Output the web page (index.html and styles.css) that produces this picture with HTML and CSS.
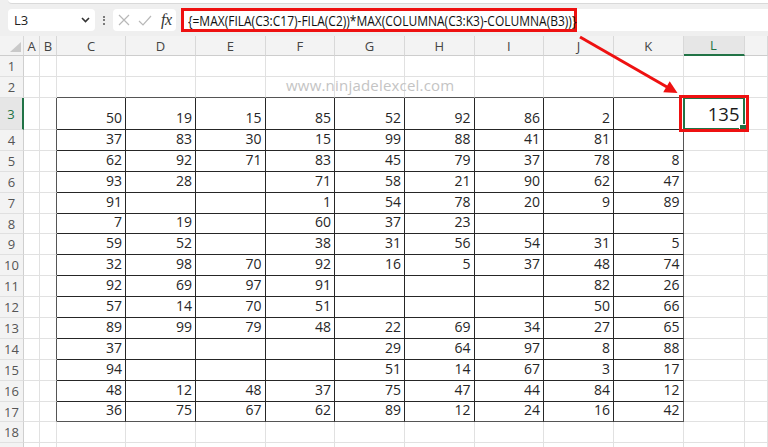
FILE: index.html
```html
<!DOCTYPE html>
<html lang="es">
<head>
<meta charset="utf-8">
<title>Excel</title>
<link rel="stylesheet" href="styles.css">
</head>
<body>
<div class="top">
  <div class="ribbon-edge"></div>
  <div class="fbar">
    <div class="namebox"><span>L3</span><svg class="chev" width="9" height="6" viewBox="0 0 9 6"><path d="M1 1l3.5 3.5L8 1" fill="none" stroke="#333" stroke-width="1.6"/></svg></div>
    <div class="grip"><i></i><i></i><i></i></div>
    <div class="fxbox">
      <svg class="ico-x" width="12" height="12" viewBox="0 0 12 12"><path d="M1 1l10 10M11 1L1 11" stroke="#b8b8b8" stroke-width="1.2" fill="none"/></svg>
      <svg class="ico-ok" width="14" height="11" viewBox="0 0 14 11"><path d="M1 6l4 4 8-9" fill="none" stroke="#b8b8b8" stroke-width="1.2"/></svg>
      <span class="fx">fx</span>
    </div>
    <div class="formula"><span class="fbox"><span class="ftext">{=MAX(FILA(C3:C17)-FILA(C2))*MAX(COLUMNA(C3:K3)-COLUMNA(B3))}</span></span></div>
  </div>
</div>
<div class="sheet">
  <div class="row hdr"><span class="corner"><svg width="11" height="10" viewBox="0 0 11 10"><path d="M11 0V10H0Z" fill="#c9c9c9"/></svg></span><span>A</span><span>B</span><span>C</span><span>D</span><span>E</span><span>F</span><span>G</span><span>H</span><span>I</span><span>J</span><span>K</span><span class="on">L</span><span></span></div>
  <div class="row r1"><span class="rh">1</span><span></span><span></span><span></span><span></span><span></span><span></span><span></span><span></span><span></span><span></span><span></span><span></span><span></span></div>
  <div class="row r2"><span class="rh">2</span><span></span><span></span><span class="tb"></span><span class="tb"></span><span class="tb"></span><span class="tb"></span><span class="tb"></span><span class="tb"></span><span class="tb"></span><span class="tb"></span><span class="tb"></span><span></span><span></span></div>
  <div class="row r3"><span class="rh on">3</span><span></span><span class="lb"></span><span class="d">50</span><span class="d">19</span><span class="d">15</span><span class="d">85</span><span class="d">52</span><span class="d">92</span><span class="d">86</span><span class="d">2</span><span class="d"></span><span class="sel">135<b class="mark"></b></span><span></span></div>
  <div class="row"><span class="rh">4</span><span></span><span class="lb"></span><span class="d">37</span><span class="d">83</span><span class="d">30</span><span class="d">15</span><span class="d">99</span><span class="d">88</span><span class="d">41</span><span class="d">81</span><span class="d"></span><span></span><span></span></div>
  <div class="row"><span class="rh">5</span><span></span><span class="lb"></span><span class="d">62</span><span class="d">92</span><span class="d">71</span><span class="d">83</span><span class="d">45</span><span class="d">79</span><span class="d">37</span><span class="d">78</span><span class="d">8</span><span></span><span></span></div>
  <div class="row"><span class="rh">6</span><span></span><span class="lb"></span><span class="d">93</span><span class="d">28</span><span class="d"></span><span class="d">71</span><span class="d">58</span><span class="d">21</span><span class="d">90</span><span class="d">62</span><span class="d">47</span><span></span><span></span></div>
  <div class="row"><span class="rh">7</span><span></span><span class="lb"></span><span class="d">91</span><span class="d"></span><span class="d"></span><span class="d">1</span><span class="d">54</span><span class="d">78</span><span class="d">20</span><span class="d">9</span><span class="d">89</span><span></span><span></span></div>
  <div class="row"><span class="rh">8</span><span></span><span class="lb"></span><span class="d">7</span><span class="d">19</span><span class="d"></span><span class="d">60</span><span class="d">37</span><span class="d">23</span><span class="d"></span><span class="d"></span><span class="d"></span><span></span><span></span></div>
  <div class="row"><span class="rh">9</span><span></span><span class="lb"></span><span class="d">59</span><span class="d">52</span><span class="d"></span><span class="d">38</span><span class="d">31</span><span class="d">56</span><span class="d">54</span><span class="d">31</span><span class="d">5</span><span></span><span></span></div>
  <div class="row"><span class="rh">10</span><span></span><span class="lb"></span><span class="d">32</span><span class="d">98</span><span class="d">70</span><span class="d">92</span><span class="d">16</span><span class="d">5</span><span class="d">37</span><span class="d">48</span><span class="d">74</span><span></span><span></span></div>
  <div class="row"><span class="rh">11</span><span></span><span class="lb"></span><span class="d">92</span><span class="d">69</span><span class="d">97</span><span class="d">91</span><span class="d"></span><span class="d"></span><span class="d"></span><span class="d">82</span><span class="d">26</span><span></span><span></span></div>
  <div class="row"><span class="rh">12</span><span></span><span class="lb"></span><span class="d">57</span><span class="d">14</span><span class="d">70</span><span class="d">51</span><span class="d"></span><span class="d"></span><span class="d"></span><span class="d">50</span><span class="d">66</span><span></span><span></span></div>
  <div class="row"><span class="rh">13</span><span></span><span class="lb"></span><span class="d">89</span><span class="d">99</span><span class="d">79</span><span class="d">48</span><span class="d">22</span><span class="d">69</span><span class="d">34</span><span class="d">27</span><span class="d">65</span><span></span><span></span></div>
  <div class="row"><span class="rh">14</span><span></span><span class="lb"></span><span class="d">37</span><span class="d"></span><span class="d"></span><span class="d"></span><span class="d">29</span><span class="d">64</span><span class="d">97</span><span class="d">8</span><span class="d">88</span><span></span><span></span></div>
  <div class="row"><span class="rh">15</span><span></span><span class="lb"></span><span class="d">94</span><span class="d"></span><span class="d"></span><span class="d"></span><span class="d">51</span><span class="d">14</span><span class="d">67</span><span class="d">3</span><span class="d">17</span><span></span><span></span></div>
  <div class="row"><span class="rh">16</span><span></span><span class="lb"></span><span class="d">48</span><span class="d">12</span><span class="d">48</span><span class="d">37</span><span class="d">75</span><span class="d">47</span><span class="d">44</span><span class="d">84</span><span class="d">12</span><span></span><span></span></div>
  <div class="row r17"><span class="rh">17</span><span></span><span class="lb"></span><span class="d">36</span><span class="d">75</span><span class="d">67</span><span class="d">62</span><span class="d">89</span><span class="d">12</span><span class="d">24</span><span class="d">16</span><span class="d">42</span><span></span><span></span></div>
  <div class="row"><span class="rh">18</span><span></span><span></span><span></span><span></span><span></span><span></span><span></span><span></span><span></span><span></span><span></span><span></span><span></span></div>
  <div class="row"><span class="rh"></span><span></span><span></span><span></span><span></span><span></span><span></span><span></span><span></span><span></span><span></span><span></span><span></span><span></span></div>
</div>
<div class="watermark">www.ninjadelexcel.com</div>
<svg class="arrow" width="768" height="447" viewBox="0 0 768 447"><path d="M580 37L667 87" stroke="#ee1111" stroke-width="3" fill="none"/><path d="M677.5 93L663.2 92.3L669.7 81.3Z" fill="#ee1111"/></svg>
</body>
</html>
```
FILE: styles.css
```css
* { box-sizing: border-box; margin: 0; padding: 0; }
html, body { width: 768px; height: 447px; overflow: hidden; background: #fff; }
body { position: relative; font-family: "Open Sans", "Noto Sans", sans-serif; color: #222; }

.top { background: #efefef; }
.ribbon-edge { height: 4px; margin-left: 8px; background: #fff; border-bottom: 1px solid #d9d9d9; border-bottom-left-radius: 5px; }
.fbar { display: flex; align-items: center; height: 32px; padding: 5px 0 5px 8px; }
.namebox { width: 87px; height: 22px; background: #fff; border-radius: 4px; display: flex; align-items: center; justify-content: space-between; padding: 0 5px 0 6px; font-size: 13px; color: #222; }
.grip { width: 18px; display: flex; flex-direction: column; align-items: center; gap: 1.5px; }
.grip i { width: 2px; height: 2px; background: #555; border-radius: 1px; }
.fxbox { width: 63px; height: 22px; background: #fff; border-radius: 4px; display: flex; align-items: center; padding-left: 5px; }
.ico-x { margin-right: 8px; }
.ico-ok { margin-right: 9px; }
.fx { font-family: "Liberation Serif", serif; font-style: italic; font-size: 16px; color: #333; letter-spacing: -0.5px; }
.formula { flex: 1; height: 22px; margin-left: 5px; background: #fff; border-radius: 4px 0 0 4px; display: flex; align-items: center; }
.fbox { width: 396px; height: 24px; flex: none; border: 3px solid #ee1111; display: flex; align-items: center; padding-left: 4px; }
.ftext { font-size: 15px; line-height: 18px; color: #111; white-space: nowrap; transform: scaleX(0.8); transform-origin: left center; }

.sheet { display: flex; flex-direction: column; }
.row { display: grid; grid-template-columns: 24px 16px 17px 69px 70px 69.5px 69.5px 70px 69.5px 69.5px 70px 69.5px 61px 1fr; height: 20.9px; flex: none; }
.row.hdr { height: 20px; }
.row.r1, .row.r2 { height: 21px; }
.row.r3 { height: 32px; }
.row > span { display: flex; justify-content: flex-end; align-items: flex-end; padding: 0 3px 3px 0; border-right: 1px solid #e1e1e1; border-bottom: 1px solid #e1e1e1; font-size: 14px; line-height: 16px; color: #262626; white-space: nowrap; }
.hdr > span { background: #f3f3f3; justify-content: center; align-items: center; padding: 0; font-size: 13px; color: #444; border-right-color: #d8d8d8; border-bottom-color: #cdcdcd; }
.hdr > .corner { justify-content: flex-end; align-items: flex-end; padding: 0 2px 3px 0; }
.hdr > .on { background: #e6e6e6; color: #217346; border-bottom: 2px solid #217346; }
.row > .rh { background: #f3f3f3; justify-content: center; align-items: center; padding: 0; font-size: 13px; color: #555; border-right-color: #cfcfcf; border-bottom-color: #e0e0e0; }
.row > .rh.on { color: #217346; background: #e6e6e6; border-right: 2px solid #217346; }

.row > .tb { border-bottom-color: #555; }
.row > .lb { border-right-color: #555; }
.row > .d { border-right-color: #262626; border-bottom-color: #262626; }
.row > .d:nth-child(12) { border-right-color: #555; }
.r17 > .d { border-bottom-color: #555; }

.row > .sel { position: relative; font-size: 18.5px; line-height: 22px; padding: 0 4px 4px 0; color: #1a1a1a; }
.sel::after { content: ""; position: absolute; top: -1px; left: -1px; right: -1px; bottom: -1px; border: 2px solid #217346; }
.sel::before { content: ""; position: absolute; right: -3px; bottom: -3px; width: 6px; height: 6px; background: #217346; border: 1px solid #fff; z-index: 2; }
.mark { position: absolute; top: -3px; left: -5px; right: -5px; bottom: -3px; border: 3px solid #ee1111; z-index: 3; }

.watermark { position: absolute; left: 286px; top: 75px; font-size: 15px; line-height: 20px; color: #c4c4c4; letter-spacing: 0.2px; }
.arrow { position: absolute; left: 0; top: 0; pointer-events: none; }
```
